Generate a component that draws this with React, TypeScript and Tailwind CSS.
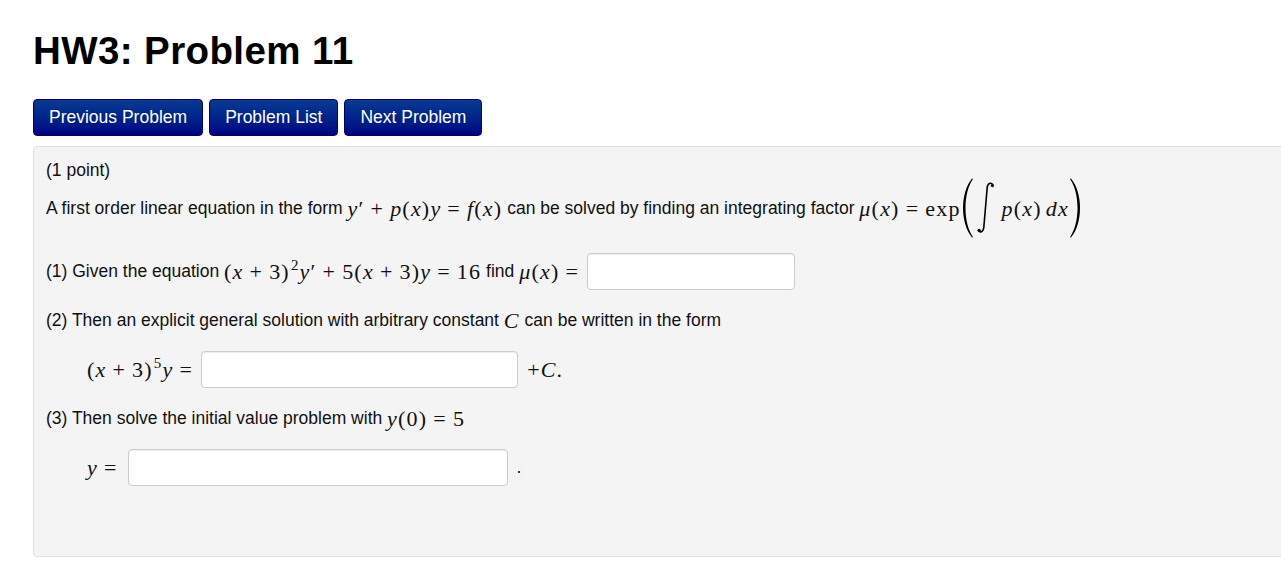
import React from 'react';

const M: React.FC<{ children: React.ReactNode; className?: string }> = ({ children, className = '' }) => (
    <span className={"font-['Liberation_Serif','Times_New_Roman',serif] text-[22px] tracking-[1.2px] whitespace-nowrap " + className}>{children}</span>
);

const V: React.FC<{ children: React.ReactNode }> = ({ children }) => <span className="italic">{children}</span>;

const Op: React.FC<{ children: React.ReactNode }> = ({ children }) => <span className="mx-[6px]">{children}</span>;

const Sup: React.FC<{ children: React.ReactNode }> = ({ children }) => (
    <sup className="text-[15px] ml-[1px] -top-[9px]">{children}</sup>
);

const BigParen: React.FC<{ right?: boolean }> = ({ right }) => (
    <svg width="13" height="60" viewBox="0 0 13 60" className="inline-block align-middle">
        {right ? (
            <path d="M1 1 C11 15 11 45 1 59 L2 59.5 C14 45 14 15 2 0.5 Z" fill="#000" />
        ) : (
            <path d="M12 1 C2 15 2 45 12 59 L11 59.5 C-1 45 -1 15 11 0.5 Z" fill="#000" />
        )}
    </svg>
);

const Integral: React.FC = () => (
    <svg width="20" height="54" viewBox="0 0 20 54" className="inline-block align-middle mx-[2px]">
        <path d="M17 4.5 C16 1 12 1.5 11.2 6.5 L7.8 46.5 C7.1 51.5 3.8 52 2.5 49.5" fill="none" stroke="#000" strokeWidth="1.6" />
        <circle cx="16.4" cy="4.6" r="1.6" fill="#000" />
        <circle cx="3.1" cy="49.3" r="1.6" fill="#000" />
    </svg>
);

const Input: React.FC<{ w: string }> = ({ w }) => (
    <input type="text" className={'h-[37px] bg-white border border-[#cccccc] rounded-[4px] shadow-[inset_0_1px_1px_rgba(0,0,0,0.075)] ' + w} />
);

const NavButton: React.FC<{ label: string }> = ({ label }) => (
    <button className="h-[37px] px-[15px] rounded-[4px] text-white text-[17.5px] bg-linear-to-b from-[#0a3a94] to-[#000080] border border-[#00006a]">
        {label}
    </button>
);

const App: React.FC = () => {
    return (
        <div className="min-h-[583px] w-full overflow-x-hidden bg-white text-black font-['Liberation_Sans',Arial,sans-serif]">
            <div className="pl-[33px]">
                <h1 className="pt-[29px] text-[38.5px] leading-[44px] font-bold tracking-[0.4px]">HW3: Problem 11</h1>

                <div className="mt-[26px] flex gap-[6px]">
                    <NavButton label="Previous Problem" />
                    <NavButton label="Problem List" />
                    <NavButton label="Next Problem" />
                </div>

                <div className="mt-[10px] w-[1270px] h-[411px] bg-[#f4f4f4] border border-[#e0e0e0] rounded-[4px] pl-[12px] pt-[11px] text-[17.5px] text-[#111]">
                    <div className="h-[24px] leading-[24px]">(1 point)</div>

                    <div className="h-[52px] flex items-center whitespace-nowrap">
                        <span>A first order linear equation in the form&nbsp;</span>
                        <M>
                            <V>y</V>′<Op>+</Op><V>p</V>(<V>x</V>)<V>y</V><Op>=</Op><V>f</V>(<V>x</V>)
                        </M>
                        <span>&nbsp;can be solved by finding an integrating factor&nbsp;</span>
                        <M className="flex items-center">
                            <V>μ</V>(<V>x</V>)<Op>=</Op>exp
                            <BigParen />
                            <Integral />
                            <span className="ml-[4px]"><V>p</V>(<V>x</V>)<span className="ml-[4px]"><V>dx</V></span></span>
                            <BigParen right />
                        </M>
                    </div>

                    <div className="mt-[19px] h-[37px] flex items-center whitespace-nowrap">
                        <span>(1) Given the equation&nbsp;</span>
                        <M>
                            (<V>x</V><Op>+</Op>3)<Sup>2</Sup><V>y</V>′<Op>+</Op>5(<V>x</V><Op>+</Op>3)<V>y</V><Op>=</Op>16
                        </M>
                        <span>&nbsp;find&nbsp;</span>
                        <M>
                            <V>μ</V>(<V>x</V>)<Op>=</Op>
                        </M>
                        <Input w="w-[208px] ml-[2px]" />
                    </div>

                    <div className="mt-[18px] h-[24px] flex items-center whitespace-nowrap">
                        <span>(2) Then an explicit general solution with arbitrary constant&nbsp;</span>
                        <M><V>C</V></M>
                        <span>&nbsp;can be written in the form</span>
                    </div>

                    <div className="mt-[19px] h-[37px] flex items-center whitespace-nowrap pl-[41px]">
                        <M>
                            (<V>x</V><Op>+</Op>3)<Sup>5</Sup><V>y</V><Op>=</Op>
                        </M>
                        <Input w="w-[317px] ml-[2px]" />
                        <M className="ml-[9px]">
                            +<V>C</V>.
                        </M>
                    </div>

                    <div className="mt-[18px] h-[24px] flex items-center whitespace-nowrap">
                        <span>(3) Then solve the initial value problem with&nbsp;</span>
                        <M>
                            <V>y</V>(0)<Op>=</Op>5
                        </M>
                    </div>

                    <div className="mt-[19px] h-[37px] flex items-center whitespace-nowrap pl-[41px]">
                        <M>
                            <V>y</V><Op>=</Op>
                        </M>
                        <Input w="w-[380px] ml-[4px]" />
                        <span className="ml-[9px]">.</span>
                    </div>
                </div>
            </div>
        </div>
    );
};

export default App;
